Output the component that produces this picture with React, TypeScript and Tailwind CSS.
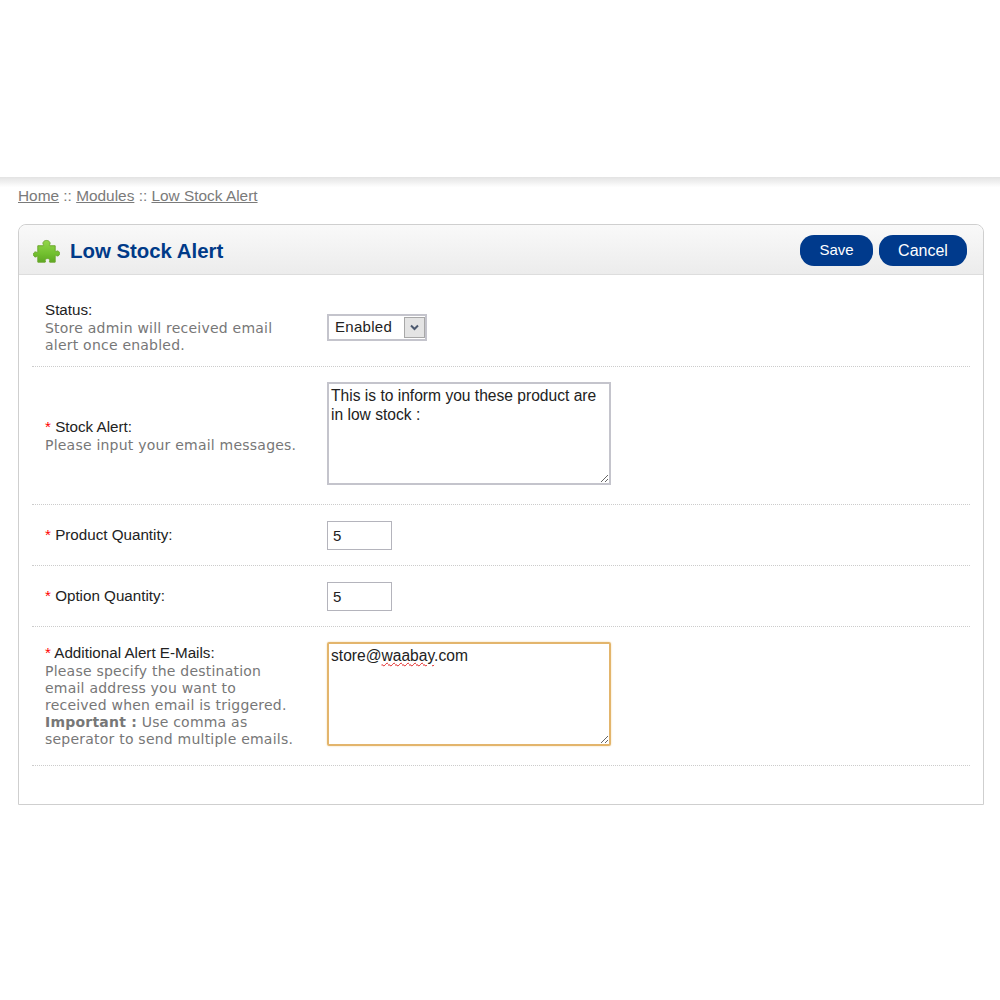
import { ReactNode } from 'react'

const arial = 'font-["Liberation_Sans",Arial,sans-serif]'

function PuzzleIcon() {
  return (
    <svg width="27" height="27" viewBox="0 0 28 28" className="mt-[3px] shrink-0">
      <defs>
        <linearGradient id="puzzle" x1="0" y1="0" x2="0" y2="1">
          <stop offset="0" stopColor="#93d64a" />
          <stop offset="0.6" stopColor="#72c02f" />
          <stop offset="1" stopColor="#5ea823" />
        </linearGradient>
      </defs>
      <path
        d="M5 7h5.500c.6 0 .7-.6.3-1.100C9.500 4.400 10.800 1.500 14 1.500s4.500 2.900 3.200 4.400c-.4.5-.3 1.100.3 1.100H23v5.500c0 .6.6.7 1.100.3 1.200-1 3.400-.3 3.400 2.200s-2.200 3.200-3.400 2.200c-.5-.4-1.100-.3-1.100.3V24h-5.500c-.6 0-.7-.6-.4-1.100.8-1.100.1-2.600-2.100-2.600s-2.900 1.500-2.100 2.600c.3.500.2 1.100-.4 1.100H5v-5.500c0-.6-.6-.7-1.100-.3-1.200 1-3.400.3-3.400-2.200s2.200-3.200 3.400-2.200c.5.4 1.100.3 1.100-.3z"
        fill="url(#puzzle)"
        stroke="#6aa52c"
        strokeWidth="1"
      />
    </svg>
  )
}

function Row({ children, control, className }: { children: ReactNode; control: ReactNode; className: string }) {
  return (
    <div className={`flex items-center border-b border-dotted border-[#cccccc] ${className}`}>
      <div className="w-[280px] shrink-0 pl-[13px]">{children}</div>
      <div className="pl-[15px]">{control}</div>
    </div>
  )
}

function Label({ text, required }: { text: string; required?: boolean }) {
  return (
    <div className={`${arial} mb-[2px] text-[15.2px] leading-[17px] text-[#222222]`}>
      {required && <span className="text-[#ff0000]">* </span>}
      {text}
    </div>
  )
}

function Help({ children }: { children: ReactNode }) {
  return (
    <div className='font-["DejaVu_Sans",Verdana,sans-serif] text-[14px] leading-[17px] tracking-[0.22px] text-[#777777]'>
      {children}
    </div>
  )
}

export default function App() {
  return (
    <div className={`${arial} h-[1000px] w-[1000px] overflow-hidden bg-white`}>
      <div className="h-[177px]" />

      {/* Breadcrumb under the header shadow */}
      <div className="h-[47px] bg-gradient-to-b from-[#e3e3e3] via-white via-[22%] to-white px-[18px] pt-[10px] text-[15.4px] leading-[18px] text-[#7a7a7a]">
        <a className="underline">Home</a> :: <a className="underline">Modules</a> :: <a className="underline">Low Stock Alert</a>
      </div>

      {/* Panel */}
      <div className="mx-[18px] h-[581px] w-[966px] rounded-tl-[8px] rounded-tr-[8px] border border-[#cfcfcf]">
        <div className="flex h-[50px] items-center justify-between rounded-tl-[8px] rounded-tr-[8px] border-b border-[#dddddd] bg-gradient-to-b from-[#f9f9f9] to-[#ececec] pl-[14px] pr-[16px] pt-[2px]">
          <div className="flex items-center gap-[10px]">
            <PuzzleIcon />
            <h1 className="mt-[2px] text-[20.4px] font-bold leading-none text-[#003a88]">Low Stock Alert</h1>
          </div>
          <div className="flex gap-[6px]">
            <button className="h-[31px] w-[73px] rounded-[14px] bg-[#003a8c] text-[15px] text-white">Save</button>
            <button className="h-[31px] w-[88px] rounded-[14px] bg-[#003a8c] text-[16px] text-white">Cancel</button>
          </div>
        </div>

        <div className="mx-[13px] w-[938px] pt-[14px]">
          <Row
            className="h-[78px]"
            control={
              <div className="relative h-[27px] w-[100px]">
                <select className="h-full w-full appearance-none border-2 border-[#c4c4cc] bg-white pl-[6px] text-[15px] tracking-[0.3px] text-[#222222]">
                  <option>Enabled</option>
                </select>
                <div className="pointer-events-none absolute right-[2px] top-[3px] flex h-[21px] w-[21px] items-center justify-center border border-[#a8a8a8] bg-[#e4e4e4]">
                  <svg width="9" height="7" viewBox="0 0 9 7">
                    <path d="M1 1.500l3.500 3.500 3.500-3.500" fill="none" stroke="#4d5a70" strokeWidth="2" />
                  </svg>
                </div>
              </div>
            }
          >
            <Label text="Status:" />
            <Help>
              Store admin will received email
              <br />
              alert once enabled.
            </Help>
          </Row>

          <Row
            className="h-[138px]"
            control={
              <textarea
                readOnly
                spellCheck={false}
                defaultValue="This is to inform you these product are in low stock :"
                className="mb-[5px] block h-[103px] w-[284px] border-2 border-[#c4c4cc] px-[2px] py-[2px] text-[15.6px] leading-[19px] text-[#222222] outline-none"
              />
            }
          >
            <Label text="Stock Alert:" required />
            <Help>Please input your email messages.</Help>
          </Row>

          <Row
            className="h-[61px]"
            control={
              <input readOnly value="5" className="block h-[29px] w-[65px] border border-[#b4b4bc] px-[5px] text-[15px] text-[#222222]" />
            }
          >
            <Label text="Product Quantity:" required />
          </Row>

          <Row
            className="h-[61px]"
            control={
              <input readOnly value="5" className="block h-[29px] w-[65px] border border-[#b4b4bc] px-[5px] text-[15px] text-[#222222]" />
            }
          >
            <Label text="Option Quantity:" required />
          </Row>

          <Row
            className="h-[139px]"
            control={
              <div className="relative mb-[4px] h-[104px] w-[284px]">
                <textarea
                  readOnly
                  spellCheck={false}
                  defaultValue="store@waabay.com"
                  className="block h-full w-full rounded-[2px] border-2 border-[#e3b56c] px-[2px] py-[2px] text-[15.6px] leading-[19px] text-[#222222] shadow-[0_0_2px_#f0d4a0] outline-none"
                />
                {/* spell-check squiggle */}
                <div className="pointer-events-none absolute left-[4px] top-[4px] text-[15.6px] leading-[19px] text-transparent">
                  store@<span className="underline decoration-[#e02020] decoration-wavy decoration-1">waabay</span>.com
                </div>
              </div>
            }
          >
            <Label text="Additional Alert E-Mails:" required />
            <Help>
              Please specify the destination
              <br />
              email address you want to
              <br />
              received when email is triggered.
              <br />
              <b>Important :</b> Use comma as
              <br />
              seperator to send multiple emails.
            </Help>
          </Row>
        </div>
      </div>
    </div>
  )
}
